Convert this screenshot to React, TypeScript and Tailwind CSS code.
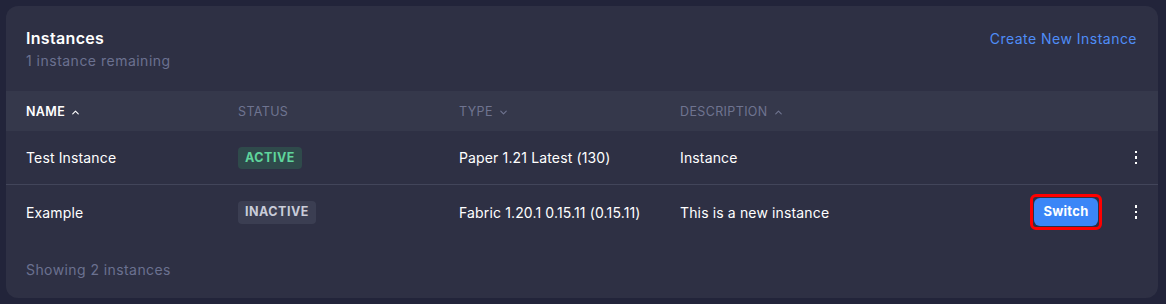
import React from 'react';

const rows = [
  { name: 'Test Instance', status: 'ACTIVE', type: 'Paper 1.21 Latest (130)', description: 'Instance', current: true },
  { name: 'Example', status: 'INACTIVE', type: 'Fabric 1.20.1 0.15.11 (0.15.11)', description: 'This is a new instance', current: false },
];

function Chevron({ up }: { up?: boolean }) {
  return (
    <svg width="11" height="11" viewBox="0 0 24 24" fill="none" stroke="currentColor" strokeWidth="2.5" strokeLinecap="round" strokeLinejoin="round">
      <path d={up ? 'm6 15 6-6 6 6' : 'm6 9 6 6 6-6'} />
    </svg>
  );
}

function Kebab() {
  return (
    <div className="flex flex-col items-center gap-[3px] w-[6px]">
      <span className="w-[2.5px] h-[2.5px] bg-white" />
      <span className="w-[2.5px] h-[2.5px] bg-white" />
      <span className="w-[2.5px] h-[2.5px] bg-white" />
    </div>
  );
}

export default function App() {
  return (
    <div className="w-[1166px] h-[304px] bg-[#22243a] p-[6px] pr-[8px] font-['Inter',sans-serif]">
      <div className="h-[292px] bg-[#2e3044] rounded-[12px] overflow-hidden flex flex-col">
        {/* Header */}
        <div className="h-[85px] px-[20px] pt-[22px] flex justify-between">
          <div>
            <h2 className="text-white font-semibold text-[16px] leading-[20px] tracking-[0.02em]">Instances</h2>
            <p className="text-[#6b7190] text-[14px] leading-[20px] mt-[3px] tracking-[0.035em]">1 instance remaining</p>
          </div>
          <a className="text-[#4f8df7] text-[14px] leading-[20px] mt-[1px] mr-[1px] tracking-[0.034em]">Create New Instance</a>
        </div>

        {/* Table head */}
        <div className="h-[40px] pt-[3px] bg-[#35384b] grid grid-cols-[212px_221px_221px_1fr] items-center pl-[20px] text-[12.5px] tracking-[0.03em]">
          <div className="flex items-center gap-[5px] text-white font-semibold">NAME <Chevron up /></div>
          <div className="text-[#6f7490]">STATUS</div>
          <div className="flex items-center gap-[5px] text-[#6f7490]">TYPE <Chevron /></div>
          <div className="flex items-center gap-[5px] text-[#6f7490]">DESCRIPTION <Chevron up /></div>
        </div>

        {/* Rows */}
        {rows.map((r, i) => (
          <div
            key={r.name}
            className={`h-[54px] grid grid-cols-[212px_221px_221px_1fr] items-center pl-[20px] text-[14px] text-white tracking-[0.01em] ${i === 0 ? 'border-b border-[#42455a]' : ''}`}
          >
            <div>{r.name}</div>
            <div>
              {r.status === 'ACTIVE' ? (
                <span className="inline-block px-[7px] py-[2px] rounded-[4px] bg-[#2f4a4b] text-[#5fd49c] text-[12.5px] font-bold tracking-[0.04em]">ACTIVE</span>
              ) : (
                <span className="inline-block px-[7px] py-[2px] rounded-[4px] bg-[#3b3e52] text-[#c9ccd9] text-[12.5px] font-bold tracking-[0.04em]">INACTIVE</span>
              )}
            </div>
            <div>{r.type}</div>
            <div className="flex items-center justify-between pr-[19px]">
              <span>{r.description}</span>
              <div className="flex items-center gap-[31px]">
                {!r.current && (
                  <div className="rounded-[6px] border-[3px] border-[#ff0000] p-[1px]">
                    <button className="w-[64px] h-[28px] rounded-[6px] bg-[#3b86f7] text-white text-[13px] font-bold tracking-[0.02em]">Switch</button>
                  </div>
                )}
                <Kebab />
              </div>
            </div>
          </div>
        ))}

        {/* Footer */}
        <div className="px-[20px] pt-[20px] text-[14px] text-[#6b7190] tracking-[0.03em]">Showing 2 instances</div>
      </div>
    </div>
  );
}
